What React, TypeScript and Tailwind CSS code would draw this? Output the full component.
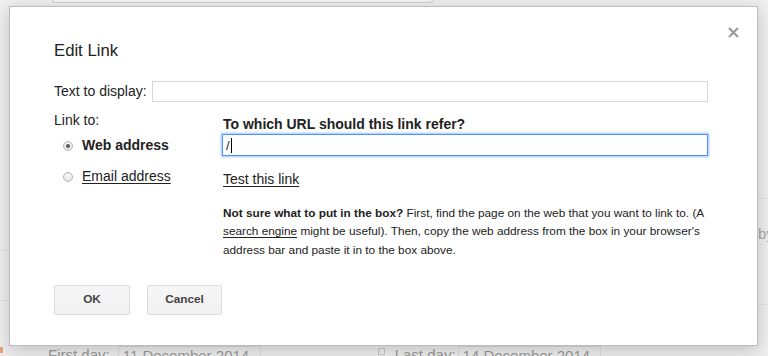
import React from "react";

const font = { fontFamily: '"Liberation Sans", Arial, sans-serif' };

function Radio({ checked }: { checked: boolean }) {
  return (
    <span className="flex h-[10px] w-[10px] items-center justify-center rounded-full border border-[#b4b4b4] bg-gradient-to-b from-[#fdfdfd] to-[#e2e2e2] shadow-[inset_0_1px_1px_rgba(0,0,0,0.08)]">
      {checked && <span className="h-[4px] w-[4px] rounded-full bg-[#5a5a5a]" />}
    </span>
  );
}

export default function App() {
  return (
    <div
      className="relative h-[356px] w-[768px] overflow-hidden bg-[#efefef] text-[#222]"
      style={font}
    >
      {/* background page */}
      <div className="flex flex-col">
        <div className="ml-[52px] h-[3px] w-[381px] rounded-b-[4px] border border-t-0 border-[#d2d2d2] bg-[#f4f4f4]" />
        <div className="flex h-[343px] justify-between">
          <div className="flex w-[9px] flex-col">
            <div className="mt-[247px] h-px bg-[#e2e2e2]" />
            <div className="mt-[49px] h-px bg-[#e2e2e2]" />
          </div>
          <div className="flex w-[10px] flex-col">
            <div className="mt-[195px] h-px bg-[#e2e2e2]" />
            <div className="mt-[26px] text-[15px] leading-[17px] text-[#a8a8a8]">by</div>
            <div className="mt-[62px] h-px bg-[#e2e2e2]" />
          </div>
        </div>
        <div className="flex h-[20px] items-start text-[15px] leading-[17px] text-[#9a9a9a]">
          <span className="mt-[1px] h-[6px] w-[3px] bg-[#e8a27a]" />
          <span className="ml-[45px]">First day:</span>
          <span className="ml-[8px] h-[20px] w-[143px] border border-[#dedede] pl-[4px]">11 December 2014</span>
          <span className="ml-[117px] mt-[2px] h-[7px] w-[7px] border border-[#c8c8c8]" />
          <span className="ml-[10px]">Last day:</span>
          <span className="ml-[2px] h-[20px] w-[143px] border border-[#dedede] pl-[4px]">14 December 2014</span>
        </div>
      </div>

      {/* dialog */}
      <div className="absolute left-[9px] top-[6px] flex h-[340px] w-[749px] flex-col border border-[#bdbdbd] bg-white pl-[44px] pr-[49px] pt-[34px] shadow-[0_4px_16px_rgba(0,0,0,0.2)]">
        <button className="absolute right-[18px] top-[20px] flex h-[11px] w-[11px] items-center justify-center">
          <svg width="11" height="11" viewBox="0 0 11 11">
            <path d="M1 1L10 10M10 1L1 10" stroke="#9a9a9a" strokeWidth="2.2" strokeLinecap="butt" />
          </svg>
        </button>

        <div className="h-[20px] text-[16.7px] leading-[20px] text-[#222]">Edit Link</div>

        <div className="mt-[20px] flex h-[21px] items-center">
          <span className="text-[14px] leading-[17px]">Text to display:</span>
          <div className="ml-[5px] h-[21px] flex-1 border border-[#d6d6d6]" />
        </div>

        <div className="mt-[10px] flex">
          <div className="flex w-[169px] flex-col text-[14px] leading-[17px]">
            <div>Link to:</div>
            <div className="mt-[8px] flex items-center">
              <span className="ml-[9px]"><Radio checked /></span>
              <span className="ml-[9px] font-bold">Web address</span>
            </div>
            <div className="mt-[14px] flex items-center">
              <span className="ml-[9px]"><Radio checked={false} /></span>
              <span className="ml-[9px] underline underline-offset-[2px]">Email address</span>
            </div>
          </div>
          <div className="flex flex-1 flex-col">
            <div className="mt-[4px] text-[14px] font-bold leading-[17px]">
              To which URL should this link refer?
            </div>
            <div className="-ml-px mt-[1px] flex h-[22px] items-center border border-[#4d90fe] pl-[3px] shadow-[0_0_2px_1px_rgba(77,144,254,0.55)]">
              <span className="text-[13px] leading-[15px] text-[#222]">/</span>
              <span className="ml-[1px] h-[15px] w-px bg-black" />
            </div>
            <div className="mt-[15px] text-[14px] leading-[17px]">
              <span className="underline underline-offset-[2px]">Test this link</span>
            </div>
            <p className="mt-[16px] w-[485px] text-[11.8px] leading-[18.4px] text-[#222]">
              <b>Not sure what to put in the box?</b> First, find the page on the web that you
              want to link to. (A <span className="underline underline-offset-[2px]">search engine</span> might
              be useful). Then, copy the web address from the box in your browser's address bar
              and paste it in to the box above.
            </p>
          </div>
        </div>

        <div className="mt-[26px] flex gap-[17px]">
          <button className="h-[30px] w-[76px] rounded-[2px] border border-[#dcdcdc] bg-gradient-to-b from-[#f6f6f6] to-[#f1f1f1] text-[11.8px] font-bold text-[#444]">
            OK
          </button>
          <button className="h-[30px] w-[75px] rounded-[2px] border border-[#dcdcdc] bg-gradient-to-b from-[#f6f6f6] to-[#f1f1f1] text-[11.8px] font-bold text-[#444]">
            Cancel
          </button>
        </div>
      </div>
    </div>
  );
}
